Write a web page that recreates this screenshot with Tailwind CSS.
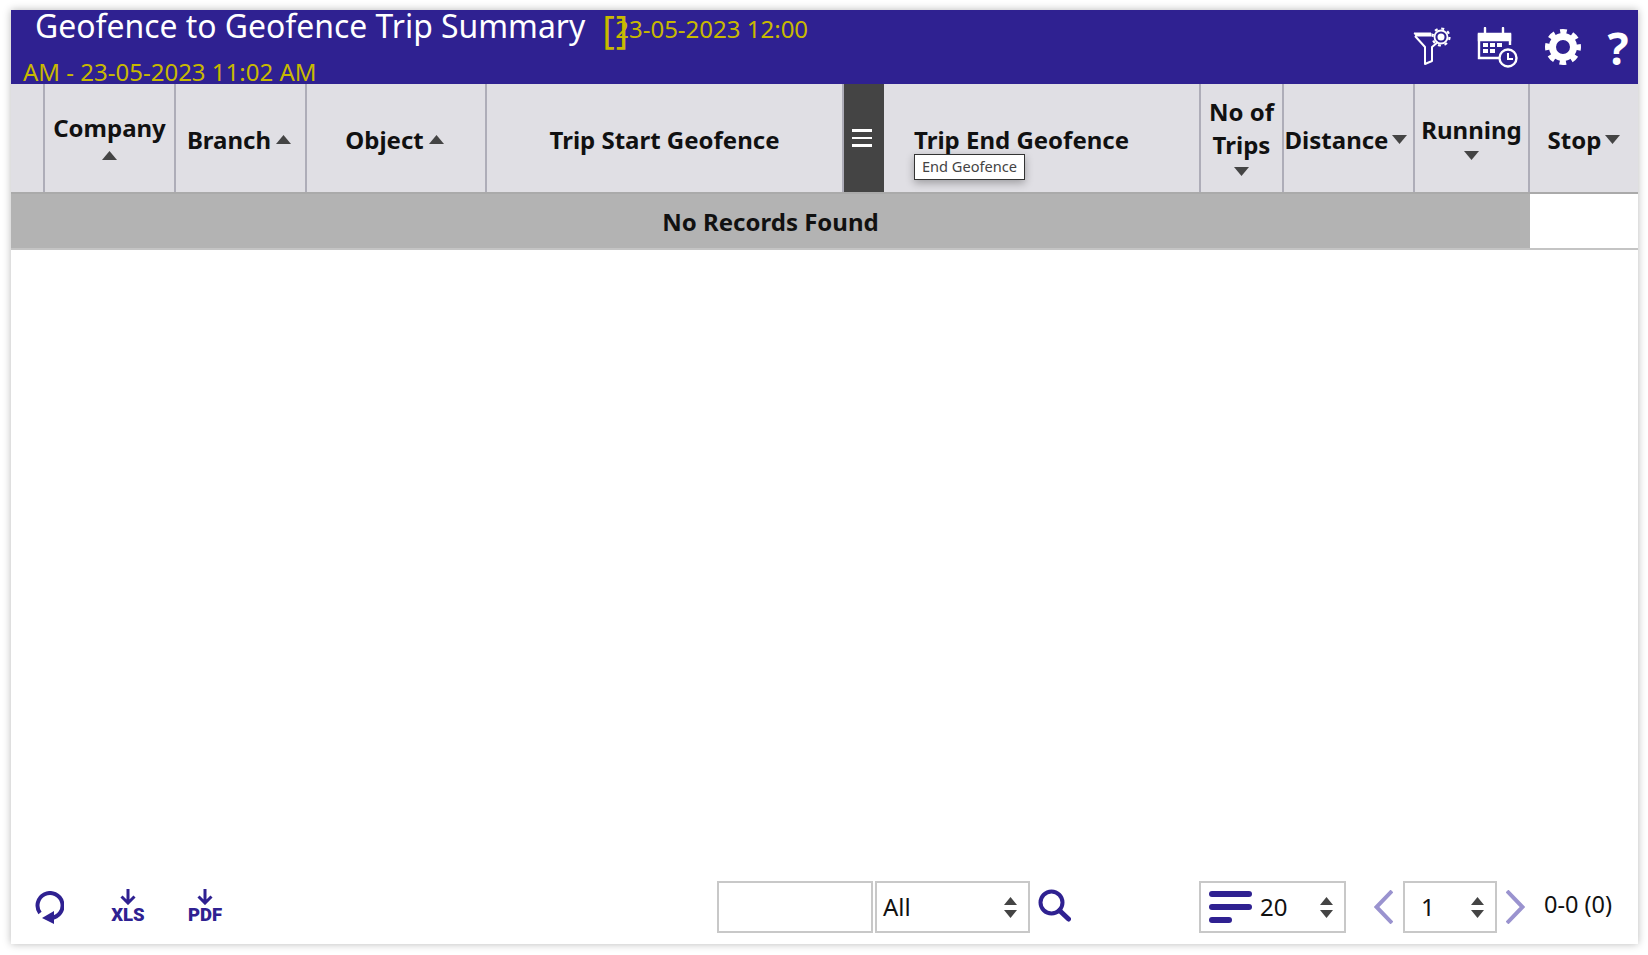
<!DOCTYPE html>
<html lang="en">
<head>
    <meta charset="UTF-8">
    <title>Geofence to Geofence Trip Summary</title>
    <script src="https://cdn.jsdelivr.net/npm/@tailwindcss/browser@4"></script>
</head>
<body class="bg-white font-['Noto_Sans',sans-serif] h-[955px] overflow-hidden">
    <div class="ml-[11px] mt-[10px] h-[934px] w-[1627px] flex flex-col bg-white shadow-[0_0_8px_rgba(0,0,0,0.28)]">

        <!-- title bar -->
        <div class="h-[74px] bg-[#2f2191] flex justify-between shrink-0">
            <div class="leading-none">
                <div class="flex items-start h-[40px] pl-[24px] whitespace-nowrap">
                    <span class="text-white text-[31.9px] leading-[32px]">Geofence to Geofence Trip Summary</span>
                    <span class="ml-[17px] mt-[1px] text-[#c8b900] text-[38px] leading-[34px] tracking-[1px] w-[13px]">[]</span>
                    <span class="mt-[5px] text-[#c8b900] text-[24px] leading-[28px]">23-05-2023 12:00</span>
                </div>
                <div class="pl-[12px] mt-[10px] text-[#c8b900] text-[24px] leading-[24px] whitespace-nowrap">AM - 23-05-2023 11:02 AM</div>
            </div>
            <div class="flex items-start pr-[8px] pt-[17px]">
                <svg class="w-[38px] h-[40px] mr-[26px]" viewBox="0 0 38 40" fill="none" stroke="white" stroke-width="2">
                    <path d="M1 6 H18 V9 H3 Z" fill="white" stroke-width="1"/>
                    <path d="M2 9 L12 20 V37 L19 34 V20 L25 15" stroke-linejoin="round"/>
                    <circle cx="28" cy="10" r="3.5" fill="white" stroke="none"/>
                    <circle cx="28" cy="10" r="6.5" stroke-width="1.8"/>
                    <circle cx="28" cy="10" r="8.5" stroke-width="2.2" stroke-dasharray="3 3.67"/>
                </svg>
                <svg class="w-[41px] h-[41px] mr-[27px]" viewBox="0 0 41 41" fill="none" stroke="white" stroke-width="2.4">
                    <path d="M26 31 H2 V7 H33 V18"/>
                    <path d="M2 8 H33 V13 H2 Z" fill="white"/>
                    <path d="M8 1 V9 M26 1 V9" stroke-linecap="round"/>
                    <path d="M6 16 H11 V20 H6 Z M13 16 H18 V20 H13 Z M20 16 H25 V20 H20 Z M6 22 H11 V26 H6 Z M13 22 H18 V26 H13 Z" fill="white" stroke="none"/>
                    <circle cx="31" cy="31" r="8.5" fill="#2f2191"/>
                    <path d="M31 26 V32 H36" stroke-width="2"/>
                </svg>
                <svg class="w-[36px] h-[36px] mr-[25px] mt-[2px]" viewBox="0 0 36 36" fill="none" stroke="white">
                    <circle cx="18" cy="18" r="10.5" stroke-width="7"/>
                    <circle cx="18" cy="18" r="15.5" stroke-width="5" stroke-dasharray="6.6 5.57" stroke-dashoffset="3.3"/>
                </svg>
                <span class="w-[24px] text-center text-white font-bold text-[44px] leading-[42px]">?</span>
            </div>
        </div>

        <!-- table head -->
        <div class="relative grid grid-cols-[34px_131px_131px_180px_357px_40px_317px_83px_131px_115px_108px] h-[110px] shrink-0 bg-[#e0dfe4] border-b-2 border-[#aaaaaa] text-[#111] font-bold text-[24px] leading-[33px]">
            <div class="border-r-2 border-[#aeadb8]"></div>
            <div class="border-r-2 border-[#aeadb8] flex flex-col items-center justify-center pb-[5px]">
                <span>Company</span>
                <svg class="w-[15px] h-[9px] mt-[7px]" viewBox="0 0 15 9"><path d="M7.5 0 L15 9 H0 Z" fill="#444"/></svg>
            </div>
            <div class="border-r-2 border-[#aeadb8] flex items-center justify-center gap-[5px] pt-[2px] pr-[3px]">
                <span>Branch</span>
                <svg class="w-[15px] h-[9px]" viewBox="0 0 15 9"><path d="M7.5 0 L15 9 H0 Z" fill="#444"/></svg>
            </div>
            <div class="border-r-2 border-[#aeadb8] flex items-center justify-center gap-[5px] pt-[2px] pr-[3px]">
                <span>Object</span>
                <svg class="w-[15px] h-[9px]" viewBox="0 0 15 9"><path d="M7.5 0 L15 9 H0 Z" fill="#444"/></svg>
            </div>
            <div class="border-r-2 border-[#aeadb8] flex items-center justify-center pt-[2px]">Trip Start Geofence</div>
            <div class="bg-[#444444] flex flex-col items-center justify-center gap-[5px] pr-[4px]">
                <span class="block w-[20px] h-[2.5px] bg-white"></span>
                <span class="block w-[20px] h-[2.5px] bg-white"></span>
                <span class="block w-[20px] h-[2.5px] bg-white"></span>
            </div>
            <div class="border-r-2 border-[#aeadb8] flex items-center pl-[30px] pt-[2px]">Trip End Geofence</div>
            <div class="border-r-2 border-[#aeadb8] flex flex-col items-center justify-center text-center pb-[5px]">
                <span>No of</span>
                <span>Trips</span>
                <svg class="w-[15px] h-[9px] mt-[6px]" viewBox="0 0 15 9"><path d="M0 0 H15 L7.5 9 Z" fill="#444"/></svg>
            </div>
            <div class="border-r-2 border-[#aeadb8] flex items-center justify-center gap-[4px] pt-[2px] pr-[5px]">
                <span>Distance</span>
                <svg class="w-[15px] h-[9px]" viewBox="0 0 15 9"><path d="M0 0 H15 L7.5 9 Z" fill="#444"/></svg>
            </div>
            <div class="border-r-2 border-[#aeadb8] flex flex-col items-center justify-center pb-[4px]">
                <span>Running</span>
                <svg class="w-[15px] h-[9px] mt-[5px]" viewBox="0 0 15 9"><path d="M0 0 H15 L7.5 9 Z" fill="#444"/></svg>
            </div>
            <div class="flex items-center justify-center gap-[4px] pt-[2px]">
                <span>Stop</span>
                <svg class="w-[15px] h-[9px]" viewBox="0 0 15 9"><path d="M0 0 H15 L7.5 9 Z" fill="#444"/></svg>
            </div>
            <div class="absolute left-[903px] top-[70px] w-[111px] h-[26px] pb-[2px] bg-white border border-[#333] shadow-[0_3px_8px_rgba(0,0,0,0.3)] flex items-center justify-center text-[14.6px] font-normal text-[#444] leading-none">End Geofence</div>
        </div>

        <!-- empty row -->
        <div class="flex h-[56px] shrink-0 border-b-2 border-[#c4c4c4]">
            <div class="w-[1519px] pt-[1px] bg-[#b3b3b3] flex items-center justify-center text-[#111] font-bold text-[24px]">No Records Found</div>
        </div>

        <div class="flex-1"></div>

        <!-- footer toolbar -->
        <div class="h-[52px] mb-[11px] flex items-center shrink-0">
            <svg class="ml-[23px] w-[30px] h-[33px]" viewBox="0 0 30 33" fill="none">
                <path d="M6 22 A12.5 12.5 0 1 1 17 27" stroke="#2f2191" stroke-width="4"/>
                <path d="M8 27 L20 20 V33 Z" fill="#2f2191"/>
            </svg>
            <div class="ml-[46px] w-[36px] -mt-[2px] flex flex-col items-center gap-[2px] text-[#2f2191] font-['Roboto',sans-serif] font-black text-[18.5px] leading-[17px]">
                <svg class="w-[16px] h-[16px]" viewBox="0 0 16 16" fill="none" stroke="#2f2191" stroke-width="3"><path d="M8 0 V13 M1.5 7.5 L8 14 L14.5 7.5"/></svg>
                <span>XLS</span>
            </div>
            <div class="ml-[41px] w-[36px] -mt-[1px] flex flex-col items-center gap-[2px] text-[#2f2191] font-['Roboto',sans-serif] font-black text-[18.5px] leading-[17px]">
                <svg class="w-[16px] h-[16px]" viewBox="0 0 16 16" fill="none" stroke="#2f2191" stroke-width="3"><path d="M8 0 V13 M1.5 7.5 L8 14 L14.5 7.5"/></svg>
                <span>PDF</span>
            </div>

            <div class="ml-[494px] w-[156px] h-[52px] border-2 border-[#c8c8c8]"></div>
            <div class="ml-[2px] w-[155px] h-[52px] border-2 border-[#c8c8c8] flex items-center justify-between pl-[6px] pr-[11px] text-[24px] text-[#111]">
                <span>All</span>
                <svg class="w-[13px] h-[21px]" viewBox="0 0 13 21" fill="#444"><path d="M6.5 0 L13 8 H0 Z M0 13 H13 L6.5 21 Z"/></svg>
            </div>
            <svg class="ml-[8px] w-[33px] h-[33px] -mt-[3px]" viewBox="0 0 33 33" fill="none" stroke="#2f2191">
                <circle cx="13.5" cy="13.5" r="11" stroke-width="4"/>
                <path d="M21.5 21.5 L30.5 30" stroke-width="5" stroke-linecap="round"/>
            </svg>

            <div class="ml-[128px] w-[147px] h-[52px] border-2 border-[#c8c8c8] flex items-center pl-[8px] pr-[11px] text-[24px] text-[#111]">
                <div class="flex flex-col gap-[7px] w-[43px]">
                    <span class="block h-[6px] w-[43px] rounded-full bg-[#2f2191]"></span>
                    <span class="block h-[6px] w-[43px] rounded-full bg-[#2f2191]"></span>
                    <span class="block h-[6px] w-[23px] rounded-full bg-[#2f2191]"></span>
                </div>
                <span class="ml-[8px]">20</span>
                <svg class="ml-auto w-[13px] h-[21px]" viewBox="0 0 13 21" fill="#444"><path d="M6.5 0 L13 8 H0 Z M0 13 H13 L6.5 21 Z"/></svg>
            </div>
            <svg class="ml-[28px] w-[19px] h-[34px]" viewBox="0 0 19 34" fill="none" stroke="#9a93cf" stroke-width="4"><path d="M18 1 L2.5 17 L18 33"/></svg>
            <div class="ml-[10px] w-[94px] h-[52px] border-2 border-[#c8c8c8] flex items-center pl-[16px] pr-[11px] text-[24px] text-[#111]">
                <span>1</span>
                <svg class="ml-auto w-[13px] h-[21px]" viewBox="0 0 13 21" fill="#444"><path d="M6.5 0 L13 8 H0 Z M0 13 H13 L6.5 21 Z"/></svg>
            </div>
            <svg class="ml-[9px] w-[19px] h-[34px]" viewBox="0 0 19 34" fill="none" stroke="#9a93cf" stroke-width="4"><path d="M1 1 L16.5 17 L1 33"/></svg>
            <span class="ml-[19px] text-[23.5px] text-[#111] leading-none whitespace-nowrap -mt-[4px]">0-0 (0)</span>
        </div>
    </div>
</body>
</html>
